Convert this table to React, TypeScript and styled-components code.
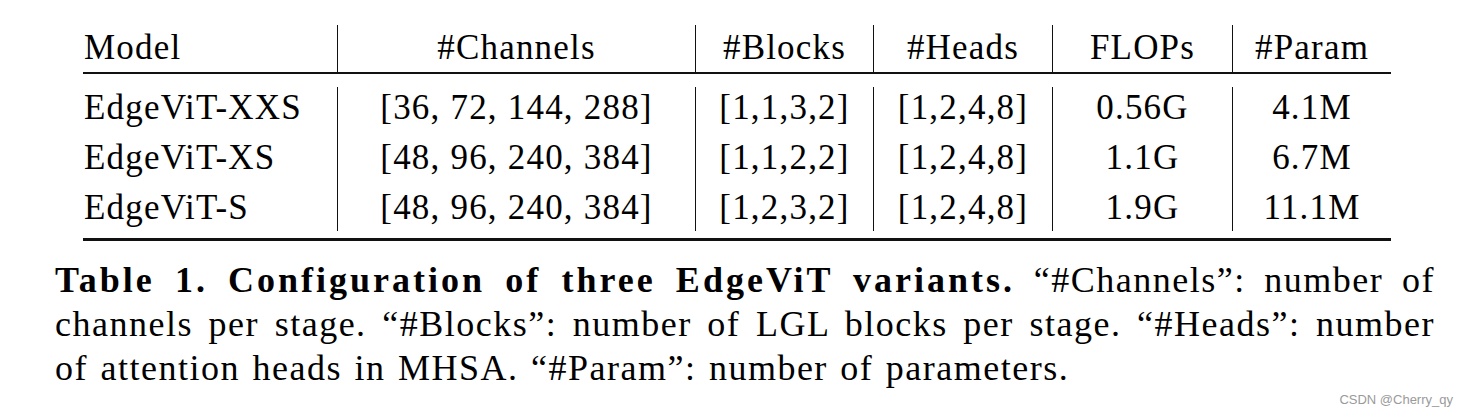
import React from "react";
import styled, {createGlobalStyle} from "styled-components";

const GlobalStyle = createGlobalStyle`
    html, body {
        margin: 0;
        padding: 0;
        background: #ffffff;
    }
`

const serif = '"Liberation Serif", "Times New Roman", serif'

const columns = '254px 358px 178px 179px 180px 159px'

const headers = ['Model', '#Channels', '#Blocks', '#Heads', 'FLOPs', '#Param']

const rows = [
    ['EdgeViT-XXS', '[36, 72, 144, 288]', '[1,1,3,2]', '[1,2,4,8]', '0.56G', '4.1M'],
    ['EdgeViT-XS', '[48, 96, 240, 384]', '[1,1,2,2]', '[1,2,4,8]', '1.1G', '6.7M'],
    ['EdgeViT-S', '[48, 96, 240, 384]', '[1,2,3,2]', '[1,2,4,8]', '1.9G', '11.1M'],
]

const App: React.FC = () => {
    return (
        <>
            <GlobalStyle/>
            <Page>
                <Table>
                    <HeadRow>
                        {headers.map((h, i) => (
                            <Cell key={h} $first={i === 0} $head>{h}</Cell>
                        ))}
                    </HeadRow>
                    <MidRule/>
                    <Body>
                        {rows.map((row, r) => row.map((v, i) => (
                            <Cell key={r + '-' + i} $first={i === 0}>{v}</Cell>
                        )))}
                    </Body>
                    <BottomRule/>
                </Table>
                <Caption>
                    <CaptionLine $justify>
                        <Bold>Table 1. Configuration of three EdgeViT variants.</Bold> “#Channels”: number of
                    </CaptionLine>
                    <CaptionLine $justify>
                        channels per stage. “#Blocks”: number of LGL blocks per stage. “#Heads”: number
                    </CaptionLine>
                    <CaptionLine>
                        of attention heads in MHSA. “#Param”: number of parameters.
                    </CaptionLine>
                </Caption>
            </Page>
            <Watermark>CSDN @Cherry_qy</Watermark>
        </>
    )
}

export default App

const Page = styled.div`
    width: 1380px;
    padding: 25px 0 0 55px;
    font-family: ${serif};
    color: #000;
`

const Table = styled.div`
    width: 1308px;
    margin-left: 28px;
    font-family: ${serif};
    font-size: 35px;
    letter-spacing: 1.2px;
`

const HeadRow = styled.div`
    display: grid;
    grid-template-columns: ${columns};
    height: 47px;
`

const Body = styled.div`
    display: grid;
    grid-template-columns: ${columns};
    grid-template-rows: 50px 50px 44px;
    margin-top: 13px;
`

const Cell = styled.div<{$first?: boolean, $head?: boolean}>`
    font-family: ${serif};
    line-height: 36px;
    padding-top: ${(props) => props.$head ? '5px' : '3px'};
    padding-left: ${(props) => props.$first ? '1px' : '0'};
    text-align: ${(props) => props.$first ? 'left' : 'center'};
    border-left: ${(props) => props.$first ? 'none' : '1.2px solid #111'};
    white-space: nowrap;
`

const MidRule = styled.div`
    height: 2px;
    background: #111;
`

const BottomRule = styled.div`
    height: 3px;
    margin-top: 7px;
    background: #111;
`

const Caption = styled.div`
    margin-top: 17px;
    font-family: ${serif};
    font-size: 36px;
    line-height: 44px;
    letter-spacing: 1.5px;
    word-spacing: 2px;
`

const CaptionLine = styled.div<{$justify?: boolean}>`
    text-align: ${(props) => props.$justify ? 'justify' : 'left'};
    text-align-last: ${(props) => props.$justify ? 'justify' : 'left'};
    white-space: nowrap;
`

const Bold = styled.span`
    font-weight: bold;
    letter-spacing: 3px;
`

const Watermark = styled.div`
    display: flex;
    justify-content: flex-end;
    padding-right: 15px;
    margin-top: 2px;
    font-family: "Liberation Sans", Arial, sans-serif;
    font-size: 13px;
    color: #9a9a9a;
`
